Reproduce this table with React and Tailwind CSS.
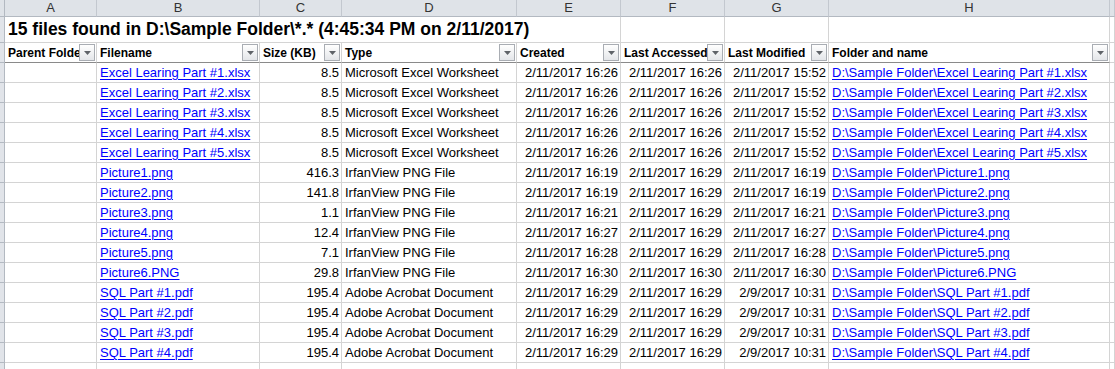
import React from 'react';

const font = { fontFamily: '"Liberation Sans", Arial, sans-serif' };

const COLS = 'grid grid-cols-[5px_92px_163px_82px_175px_104px_104px_104px_281px_1fr]';
const GRID = 'border-r border-b border-[#d4d4d4]';

const files = [
    ['Excel Learing Part #1.xlsx', '8.5', 'Microsoft Excel Worksheet', '2/11/2017 16:26', '2/11/2017 16:26', '2/11/2017 15:52'],
    ['Excel Learing Part #2.xlsx', '8.5', 'Microsoft Excel Worksheet', '2/11/2017 16:26', '2/11/2017 16:26', '2/11/2017 15:52'],
    ['Excel Learing Part #3.xlsx', '8.5', 'Microsoft Excel Worksheet', '2/11/2017 16:26', '2/11/2017 16:26', '2/11/2017 15:52'],
    ['Excel Learing Part #4.xlsx', '8.5', 'Microsoft Excel Worksheet', '2/11/2017 16:26', '2/11/2017 16:26', '2/11/2017 15:52'],
    ['Excel Learing Part #5.xlsx', '8.5', 'Microsoft Excel Worksheet', '2/11/2017 16:26', '2/11/2017 16:26', '2/11/2017 15:52'],
    ['Picture1.png', '416.3', 'IrfanView PNG File', '2/11/2017 16:19', '2/11/2017 16:29', '2/11/2017 16:19'],
    ['Picture2.png', '141.8', 'IrfanView PNG File', '2/11/2017 16:19', '2/11/2017 16:29', '2/11/2017 16:19'],
    ['Picture3.png', '1.1', 'IrfanView PNG File', '2/11/2017 16:21', '2/11/2017 16:29', '2/11/2017 16:21'],
    ['Picture4.png', '12.4', 'IrfanView PNG File', '2/11/2017 16:27', '2/11/2017 16:29', '2/11/2017 16:27'],
    ['Picture5.png', '7.1', 'IrfanView PNG File', '2/11/2017 16:28', '2/11/2017 16:29', '2/11/2017 16:28'],
    ['Picture6.PNG', '29.8', 'IrfanView PNG File', '2/11/2017 16:30', '2/11/2017 16:30', '2/11/2017 16:30'],
    ['SQL Part #1.pdf', '195.4', 'Adobe Acrobat Document', '2/11/2017 16:29', '2/11/2017 16:29', '2/9/2017 10:31'],
    ['SQL Part #2.pdf', '195.4', 'Adobe Acrobat Document', '2/11/2017 16:29', '2/11/2017 16:29', '2/9/2017 10:31'],
    ['SQL Part #3.pdf', '195.4', 'Adobe Acrobat Document', '2/11/2017 16:29', '2/11/2017 16:29', '2/9/2017 10:31'],
    ['SQL Part #4.pdf', '195.4', 'Adobe Acrobat Document', '2/11/2017 16:29', '2/11/2017 16:29', '2/9/2017 10:31'],
];

const headers = ['Parent Folder', 'Filename', 'Size (KB)', 'Type', 'Created', 'Last Accessed', 'Last Modified', 'Folder and name'];

const FilterButton = () => (
    <div className="shrink-0 w-[16px] h-[17px] mr-[1px] border border-[#a9adb3] bg-gradient-to-b from-white to-[#e4e6e9] flex items-center justify-center">
        <svg width="7" height="4" viewBox="0 0 7 4">
            <polygon points="0,0 7,0 3.5,4" fill="#5f6368" />
        </svg>
    </div>
);

const RowHead = ({ h }) => <div className={`${h} bg-[#e1e4e9] border-r border-b border-[#b3b9c1]`}></div>;

const Link = ({ children }) => (
    <span className="text-[#0000ff] underline underline-offset-[2px] decoration-[1px] whitespace-nowrap">{children}</span>
);

const App = () => {
    return (
        <div className="w-[1115px] h-[369px] overflow-hidden bg-white text-black" style={font}>
            {/* column letters */}
            <div className={COLS}>
                <div className="h-[17px] bg-[#dfe3e8] border-r border-b border-[#b3b9c1]"></div>
                {['A', 'B', 'C', 'D', 'E', 'F', 'G', 'H', ''].map((c, i) => (
                    <div key={i} className="h-[17px] bg-[#dfe3e8] border-r border-b border-[#c3c8cf] border-b-[#b3b9c1] flex items-center justify-center text-[13px] text-[#333]">
                        {c}
                    </div>
                ))}
            </div>

            {/* title row */}
            <div className={COLS}>
                <RowHead h="h-[26px]" />
                <div className={`col-span-5 h-[26px] ${GRID} flex items-center pl-[3px] text-[17.5px] font-bold whitespace-nowrap overflow-visible relative z-10`}>
                    15 files found in D:\Sample Folder\*.* (4:45:34 PM on 2/11/2017)
                </div>
                <div className={`h-[26px] ${GRID}`}></div>
                <div className={`h-[26px] ${GRID}`}></div>
                <div className={`h-[26px] ${GRID}`}></div>
                <div className={`h-[26px] ${GRID}`}></div>
            </div>

            {/* table header */}
            <div className={COLS}>
                <RowHead h="h-[20px]" />
                {headers.map((h) => (
                    <div key={h} className="h-[20px] border-r border-[#d4d4d4] border-b border-b-[#8a8a8a] flex items-center overflow-hidden">
                        <div className="flex-1 min-w-0 overflow-hidden whitespace-nowrap pl-[3px] text-[12px] font-bold">{h}</div>
                        <FilterButton />
                    </div>
                ))}
                <div className={`h-[20px] ${GRID}`}></div>
            </div>

            {/* data rows */}
            {files.map((f) => (
                <div key={f[0]} className={COLS}>
                    <RowHead h="h-[20px]" />
                    <div className={`h-[20px] ${GRID}`}></div>
                    <div className={`h-[20px] ${GRID} flex items-center pl-[3px] text-[13px] overflow-hidden`}>
                        <Link>{f[0]}</Link>
                    </div>
                    <div className={`h-[20px] ${GRID} flex items-center justify-end pr-[2px] text-[13px]`}>{f[1]}</div>
                    <div className={`h-[20px] ${GRID} flex items-center pl-[3px] text-[13px] whitespace-nowrap`}>{f[2]}</div>
                    <div className={`h-[20px] ${GRID} flex items-center justify-end pr-[2px] text-[13px] whitespace-nowrap`}>{f[3]}</div>
                    <div className={`h-[20px] ${GRID} flex items-center justify-end pr-[2px] text-[13px] whitespace-nowrap`}>{f[4]}</div>
                    <div className={`h-[20px] ${GRID} flex items-center justify-end pr-[2px] text-[13px] whitespace-nowrap`}>{f[5]}</div>
                    <div className={`h-[20px] ${GRID} flex items-center pl-[3px] text-[13px] overflow-hidden`}>
                        <Link>D:\Sample Folder\{f[0]}</Link>
                    </div>
                    <div className={`h-[20px] ${GRID}`}></div>
                </div>
            ))}

            {/* empty row */}
            <div className={COLS}>
                <RowHead h="h-[20px]" />
                {Array.from({ length: 9 }).map((_, i) => (
                    <div key={i} className={`h-[20px] ${GRID}`}></div>
                ))}
            </div>
        </div>
    );
};

export default App;
